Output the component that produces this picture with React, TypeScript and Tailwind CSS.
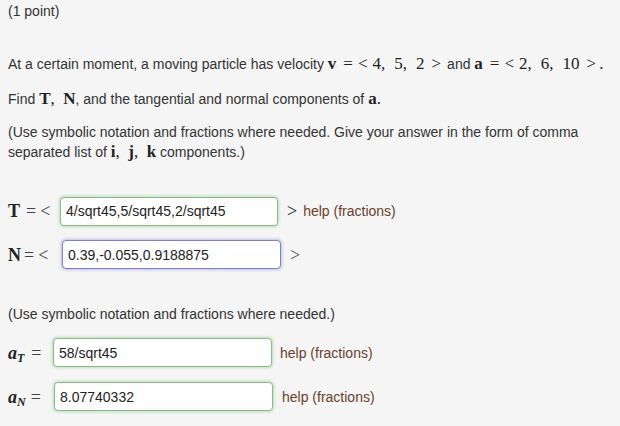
import React from "react";

const serif = "font-['Liberation_Serif','DejaVu_Serif',serif]";

function M({ children, className = "" }: { children: React.ReactNode; className?: string }) {
  return <span className={`${serif} text-[17px] text-[#222] ${className}`}>{children}</span>;
}

function Input({ value, tone, w }: { value: string; tone: "green" | "blue"; w: string }) {
  const cls =
    tone === "green"
      ? "border-[#86bf86] shadow-[0_0_3px_1px_rgba(120,190,120,0.45)]"
      : "border-[#8080cc] shadow-[0_0_3px_1px_rgba(120,120,210,0.45)]";
  return (
    <div
      className={`${w} h-[29px] rounded-[4px] border bg-white px-[5px] flex items-center text-[14px] text-[#222] ${cls}`}
    >
      {value}
    </div>
  );
}

function Vec({ name, nums }: { name: string; nums: string[] }) {
  return (
    <M>
      <b>{name}</b>
      <span className="ml-[7px]">=</span>
      <span className="ml-[5px]">&lt;</span>
      {nums.map((n, i) => (
        <span key={i} className={i === 0 ? "ml-[5px]" : "ml-[9px]"}>
          {n}
          {i < nums.length - 1 ? "," : ""}
        </span>
      ))}
      <span className="ml-[7px]">&gt;</span>
    </M>
  );
}

export default function App() {
  return (
    <div className="w-[620px] h-[426px] bg-[#f5f5f5] overflow-hidden font-['Liberation_Sans',Arial,sans-serif] text-[14px] leading-[20px] text-[#333] pl-[8px]">
      <div className="pt-[1px]">(1 point)</div>

      <div className="mt-[33px] whitespace-nowrap">
        At a certain moment, a moving particle has velocity{" "}
        <Vec name="v" nums={["4", "5", "2"]} />
        <span className="ml-[6px]">and</span>{" "}
        <Vec name="a" nums={["2", "6", "10"]} />
        <M className="ml-[3px]">.</M>
      </div>

      <div className="mt-[15px]">
        Find{" "}
        <M>
          <b>T</b>, &nbsp;<b>N</b>
        </M>
        , and the tangential and normal components of{" "}
        <M>
          <b>a</b>.
        </M>
      </div>

      <div className="mt-[13px]">
        (Use symbolic notation and fractions where needed. Give your answer in the form of comma
        <br />
        separated list of{" "}
        <M>
          <b>i</b>, &nbsp;<b>j</b>, &nbsp;<b>k</b>
        </M>{" "}
        components.)
      </div>

      <div className="mt-[35px] flex items-center h-[28px]">
        <M className="w-[52px] inline-block text-[18px]">
          <b>T</b>
          <span className="ml-[6px] text-[#444]">=</span>
          <span className="ml-[4px] text-[#444]">&lt;</span>
        </M>
        <Input value="4/sqrt45,5/sqrt45,2/sqrt45" tone="green" w="w-[218px]" />
        <M className="ml-[9px] text-[18px]">&gt;</M>
        <span className="ml-[6px] text-[#6a3f2c]">help (fractions)</span>
      </div>

      <div className="mt-[15px] flex items-center h-[29px]">
        <M className="w-[54px] inline-block text-[18px]">
          <b>N</b>
          <span className="ml-[3px] text-[#444]">=</span>
          <span className="ml-[4px] text-[#444]">&lt;</span>
        </M>
        <Input value="0.39,-0.055,0.9188875" tone="blue" w="w-[219px]" />
        <M className="ml-[9px] text-[18px] text-[#555]">&gt;</M>
      </div>

      <div className="mt-[35px]">(Use symbolic notation and fractions where needed.)</div>

      <div className="mt-[14px] flex items-center h-[29px]">
        <M className="w-[45px] inline-block text-[18px]">
          <b className="italic">a</b>
          <sub className="italic font-bold text-[12px]">T</sub>
          <span className="ml-[7px] text-[#444]">=</span>
        </M>
        <Input value="58/sqrt45" tone="green" w="w-[219px]" />
        <span className="ml-[8px] text-[#6a3f2c]">help (fractions)</span>
      </div>

      <div className="mt-[15px] flex items-center h-[29px]">
        <M className="w-[46px] inline-block text-[18px]">
          <b className="italic">a</b>
          <sub className="italic font-bold text-[12px]">N</sub>
          <span className="ml-[5px] text-[#444]">=</span>
        </M>
        <Input value="8.07740332" tone="green" w="w-[219px]" />
        <span className="ml-[9px] text-[#6a3f2c]">help (fractions)</span>
      </div>
    </div>
  );
}
